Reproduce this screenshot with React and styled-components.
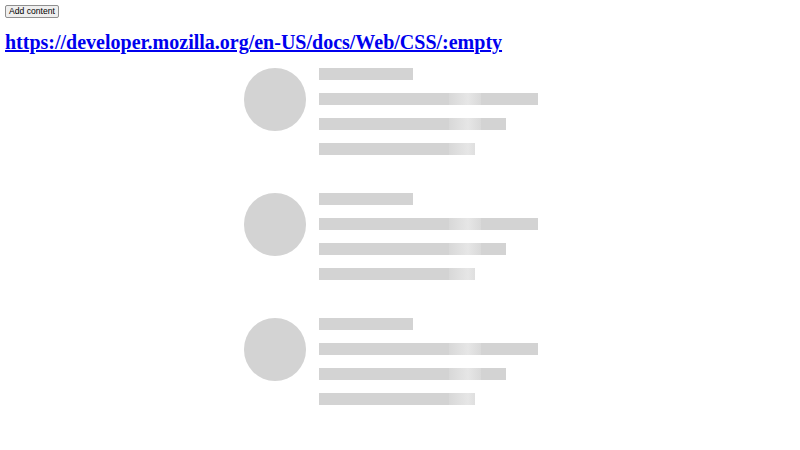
import { createGlobalStyle, styled } from "styled-components"

const GlobalStyle = createGlobalStyle`
  html, body {
    margin: 0;
    background: #ffffff;
  }
  body {
    padding: 5px;
    font-family: "Liberation Serif", "Times New Roman", serif;
  }
`

const AddButton = styled.button`
  display: block;
  height: 13px;
  padding: 0 3px;
  font-family: "Liberation Sans", Arial, sans-serif;
  font-size: 8.6px;
  line-height: 11px;
  color: #000;
  background: #efefef;
  border: 1px solid #8f8f8f;
  border-radius: 2px;
`

const Heading = styled.h1`
  margin: 13.4px 0;
  font-size: 20px;
  line-height: 23px;
  font-weight: 700;

  a {
    color: #0000ee;
    text-decoration: underline;
  }
`

const List = styled.div`
  width: 312.5px;
  margin: 0 auto;
  display: flex;
  flex-direction: column;
  gap: 37.5px;
`

const Card = styled.div`
  display: flex;
  align-items: flex-start;
  gap: 12.5px;
`

const Avatar = styled.div`
  flex: none;
  width: 62.5px;
  height: 62.5px;
  margin-top: 0.5px;
  border-radius: 50%;
  background: #d3d3d3;
`

const Lines = styled.div`
  display: flex;
  flex-direction: column;
  gap: 12.5px;
`

const Line = styled.div`
  width: ${(p) => p.$w}px;
  height: 12.5px;
  background: linear-gradient(
    90deg,
    #d3d3d3 130px,
    #d8d8d8 130px,
    #e6e6e6 149px,
    #d9d9d9 162px,
    #d3d3d3 162px
  );
`

const cards = [0, 1, 2]
const widths = [93.75, 218.75, 187.5, 156.25]

export default function App() {
  return (
    <>
      <GlobalStyle />
      <AddButton>Add content</AddButton>
      <Heading>
        <a href="#">https://developer.mozilla.org/en-US/docs/Web/CSS/:empty</a>
      </Heading>
      <List>
        {cards.map((c) => (
          <Card key={c}>
            <Avatar />
            <Lines>
              {widths.map((w) => (
                <Line key={w} $w={w} />
              ))}
            </Lines>
          </Card>
        ))}
      </List>
    </>
  )
}
